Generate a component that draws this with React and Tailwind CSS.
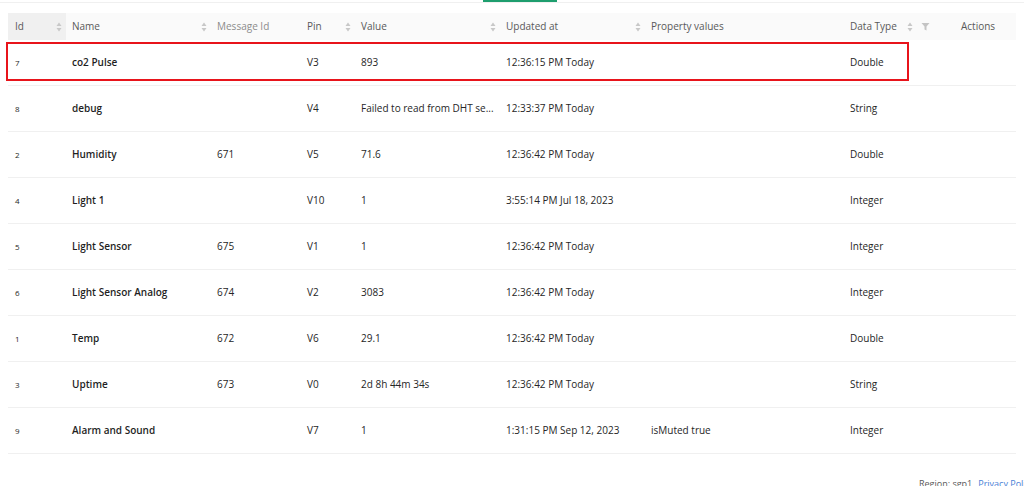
import React from "react";

const rows = [
  { id: "7", name: "co2 Pulse", msg: "", pin: "V3", value: "893", updated: "12:36:15 PM Today", prop: "", type: "Double" },
  { id: "8", name: "debug", msg: "", pin: "V4", value: "Failed to read from DHT se...", updated: "12:33:37 PM Today", prop: "", type: "String" },
  { id: "2", name: "Humidity", msg: "671", pin: "V5", value: "71.6", updated: "12:36:42 PM Today", prop: "", type: "Double" },
  { id: "4", name: "Light 1", msg: "", pin: "V10", value: "1", updated: "3:55:14 PM Jul 18, 2023", prop: "", type: "Integer" },
  { id: "5", name: "Light Sensor", msg: "675", pin: "V1", value: "1", updated: "12:36:42 PM Today", prop: "", type: "Integer" },
  { id: "6", name: "Light Sensor Analog", msg: "674", pin: "V2", value: "3083", updated: "12:36:42 PM Today", prop: "", type: "Integer" },
  { id: "1", name: "Temp", msg: "672", pin: "V6", value: "29.1", updated: "12:36:42 PM Today", prop: "", type: "Double" },
  { id: "3", name: "Uptime", msg: "673", pin: "V0", value: "2d 8h 44m 34s", updated: "12:36:42 PM Today", prop: "", type: "String" },
  { id: "9", name: "Alarm and Sound", msg: "", pin: "V7", value: "1", updated: "1:31:15 PM Sep 12, 2023", prop: "isMuted true", type: "Integer" },
];

function Sorter() {
  return (
    <svg width="6" height="10" viewBox="0 0 6 10" className="shrink-0">
      <path d="M3 0.5L5.5 4H0.5Z" fill="#c8c8c8" />
      <path d="M3 9.5L5.5 6H0.5Z" fill="#c8c8c8" />
    </svg>
  );
}

function Funnel() {
  return (
    <svg width="9" height="9" viewBox="0 0 9 9" className="shrink-0">
      <path d="M0.5 1H8.5L5.5 4.5V8.5L3.5 7.5V4.5Z" fill="#c4c4c4" />
    </svg>
  );
}

const cols = "grid grid-cols-[58px_145px_88px_56px_145px_145px_197px_111px_1fr]";

function App() {
  return (
    <div
      className="relative w-full h-[486px] overflow-hidden bg-white text-[10px] text-[#262626]"
      style={{ fontFamily: '"Open Sans", "Noto Sans", sans-serif' }}
    >
      <div className="h-[3px] border-b border-[#f0f0f0]">
        <div className="ml-[483px] w-[74px] h-[2px] bg-[#1e9e6e]"></div>
      </div>

      <div className="px-2 mt-[10px]">
        <div className={`${cols} h-[27px] bg-[#fafafa] text-[#595959]`}>
          <div className="flex items-center justify-between pl-[7px] pr-[4px] bg-[#f0f0f0]">
            <span>Id</span>
            <Sorter />
          </div>
          <div className="flex items-center justify-between pl-[6px] pr-[4px]">
            <span>Name</span>
            <Sorter />
          </div>
          <div className="flex items-center pl-[6px] text-[#8c8c8c]">Message Id</div>
          <div className="flex items-center justify-between pl-[8px] pr-[4px]">
            <span>Pin</span>
            <Sorter />
          </div>
          <div className="flex items-center justify-between pl-[6px] pr-[4px]">
            <span>Value</span>
            <Sorter />
          </div>
          <div className="flex items-center justify-between pl-[6px] pr-[4px]">
            <span>Updated at</span>
            <Sorter />
          </div>
          <div className="flex items-center pl-[6px]">Property values</div>
          <div className="flex items-center gap-[8px] pl-[8px]">
            <span className="mr-[2px]">Data Type</span>
            <Sorter />
            <Funnel />
          </div>
          <div className="flex items-center pl-[8px]">Actions</div>
        </div>

        {rows.map((r, i) => (
          <div key={i} className={`${cols} h-[46px] border-b border-[#f0f0f0] items-center`}>
            <div className="pl-[7px] text-[8px]">{r.id}</div>
            <div className="pl-[6px] font-semibold text-[#1f1f1f]">{r.name}</div>
            <div className="pl-[6px]">{r.msg}</div>
            <div className="pl-[8px]">{r.pin}</div>
            <div className="pl-[6px] whitespace-nowrap">{r.value}</div>
            <div className="pl-[6px]">{r.updated}</div>
            <div className="pl-[6px]">{r.prop}</div>
            <div className="pl-[8px]">{r.type}</div>
            <div></div>
          </div>
        ))}
      </div>

      <div className="absolute left-[6px] top-[42px] w-[903px] h-[39px] border-2 border-[#e8141b]"></div>

      <div className="flex items-start gap-[6px] ml-[919px] mt-[24px] h-[12px] text-[9px] leading-[12px] whitespace-nowrap">
        <span className="text-[#595959]">Region: sgp1</span>
        <span className="text-[#4a7fd6]">Privacy Policy</span>
      </div>
    </div>
  );
}

export default App;
